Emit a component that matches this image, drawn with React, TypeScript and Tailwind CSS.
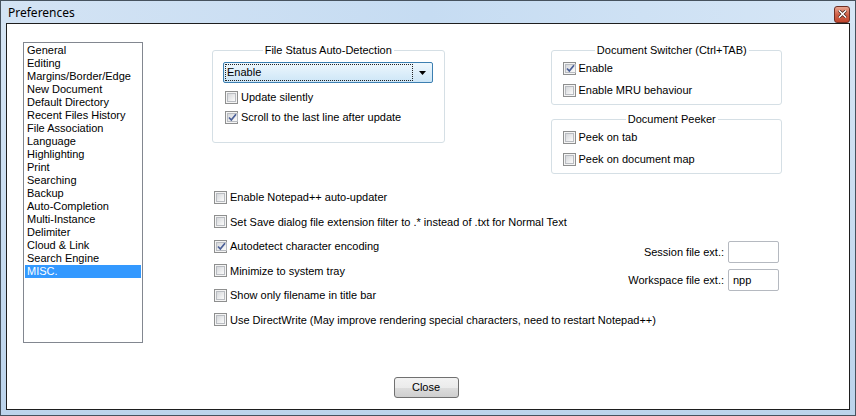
const SECTIONS = [
  "General", "Editing", "Margins/Border/Edge", "New Document", "Default Directory",
  "Recent Files History", "File Association", "Language", "Highlighting", "Print",
  "Searching", "Backup", "Auto-Completion", "Multi-Instance", "Delimiter",
  "Cloud & Link", "Search Engine", "MISC.",
];

const MISC_OPTIONS: { label: string; checked: boolean }[] = [
  { label: "Enable Notepad++ auto-updater", checked: false },
  { label: "Set Save dialog file extension filter to .* instead of .txt for Normal Text", checked: false },
  { label: "Autodetect character encoding", checked: true },
  { label: "Minimize to system tray", checked: false },
  { label: "Show only filename in title bar", checked: false },
];

function CheckBox({ checked }: { checked: boolean }) {
  return (
    <span className="w-[13px] h-[13px] shrink-0 border border-[#8e8f8f] bg-[#f4f4f4] p-[1px] flex">
      <span className="flex-1 border border-[#b9bcc1] bg-linear-to-br from-[#d6d8db] to-[#fbfbfb] flex items-center justify-center">
        {checked && (
          <svg width="9" height="9" viewBox="0 0 9 9">
            <path d="M1 4.5 L3.3 7 L8 1.2" fill="none" stroke="#4a5f97" strokeWidth="1.7" />
          </svg>
        )}
      </span>
    </span>
  );
}

function CheckRow({ label, checked, h }: { label: string; checked: boolean; h: string }) {
  return (
    <div className={`flex items-center gap-[3px] ${h}`}>
      <CheckBox checked={checked} />
      <span className="whitespace-nowrap">{label}</span>
    </div>
  );
}

function Group({ title, className, children }: { title: string; className: string; children: React.ReactNode }) {
  return (
    <fieldset className={`border border-[#d5dfe5] rounded-[3px] ${className}`}>
      <legend className="mx-auto px-[2px] leading-[13px]">{title}</legend>
      {children}
    </fieldset>
  );
}

export default function App() {
  return (
    <div className="w-[856px] h-[416px] border border-[#46525e] bg-linear-to-b from-[#d7e6f5] to-[#bcd4ec] flex flex-col font-['Liberation_Sans',Arial,sans-serif] text-[11px] text-black">
      {/* Title bar */}
      <div className="h-[22px] shrink-0 flex items-center justify-between pl-[7px] pr-[5px] bg-linear-to-r from-[#d3e3f4] via-[#c6dcf2] to-[#d6e6f6]">
        <span className="font-['Noto_Sans',sans-serif] text-[12px] leading-none pt-[2px]">Preferences</span>
        <div className="w-[16px] h-[17px] mt-[4px] rounded-[3px] border border-[#6f2f24] bg-linear-to-b from-[#e9a692] via-[#d0624a] to-[#c0442c] flex items-center justify-center">
          <svg width="9" height="8" viewBox="0 0 9 8">
            <path d="M1 0.5 L8 7.5 M8 0.5 L1 7.5" stroke="#3b1a14" strokeWidth="3" />
            <path d="M1 0.5 L8 7.5 M8 0.5 L1 7.5" stroke="#ffffff" strokeWidth="1.6" />
          </svg>
        </div>
      </div>

      {/* Client area */}
      <div className="flex-1 mx-[5px] mb-[5px] border border-[#1e1e1e] bg-white flex flex-col">
        <div className="flex items-start pl-[16px] pt-[18px]">
          {/* Section list */}
          <div className="w-[120px] h-[301px] shrink-0 border border-[#828790] pt-[1px] pl-[1px] pr-[1px]">
            {SECTIONS.map((s) => (
              <div
                key={s}
                className={`h-[13px] leading-[13px] pl-[2px] whitespace-nowrap ${s === "MISC." ? "bg-[#3399ff] text-white" : ""}`}
              >
                {s}
              </div>
            ))}
          </div>

          <div className="ml-[69px] mt-[2px] w-[570px] shrink-0 flex flex-col">
            <div className="flex items-start">
              <Group title="File Status Auto-Detection" className="w-[233px] h-[99px] px-[10px]">
                <div className="h-[21px] mt-[5px] w-[210px] border border-[#3c7fb1] rounded-[2px] bg-linear-to-b from-[#eef7fd] to-[#cde6f7] flex items-center px-[1px]">
                  <div className="h-[17px] flex-1 border border-dotted border-[#222] flex items-center pl-[1px]">Enable</div>
                  <div className="w-[18px] flex justify-center">
                    <svg width="7" height="4" viewBox="0 0 7 4">
                      <path d="M0 0 H7 L3.5 4 Z" fill="#000" />
                    </svg>
                  </div>
                </div>
                <div className="mt-[4px] ml-[2px]">
                  <CheckRow label="Update silently" checked={false} h="h-[20px]" />
                  <CheckRow label="Scroll to the last line after update" checked={true} h="h-[20px]" />
                </div>
              </Group>

              <div className="ml-[106px] w-[232px] flex flex-col">
                <Group title="Document Switcher (Ctrl+TAB)" className="h-[61px] pl-[11px]">
                  <CheckRow label="Enable" checked={true} h="h-[22px]" />
                  <CheckRow label="Enable MRU behaviour" checked={false} h="h-[22px]" />
                </Group>
                <Group title="Document Peeker" className="h-[61px] mt-[8px] pl-[11px]">
                  <CheckRow label="Peek on tab" checked={false} h="h-[22px]" />
                  <CheckRow label="Peek on document map" checked={false} h="h-[22px]" />
                </Group>
              </div>
            </div>

            <div className="mt-[11px] ml-[2px] flex flex-col">
              <div className="flex justify-between">
                <div>
                  {MISC_OPTIONS.map((o) => (
                    <CheckRow key={o.label} label={o.label} checked={o.checked} h="h-[24.5px]" />
                  ))}
                </div>
                <div className="mt-[56px] mr-[3px] flex flex-col items-end gap-[6px]">
                  <div className="flex items-center gap-[4px]">
                    <span className="whitespace-nowrap">Session file ext.:</span>
                    <div className="w-[51px] h-[22px] border border-[#b5b9c0] rounded-[2px]" />
                  </div>
                  <div className="flex items-center gap-[4px]">
                    <span className="whitespace-nowrap">Workspace file ext.:</span>
                    <div className="w-[51px] h-[22px] border border-[#b5b9c0] rounded-[2px] flex items-center pl-[4px]">npp</div>
                  </div>
                </div>
              </div>
              <CheckRow
                label="Use DirectWrite (May improve rendering special characters, need to restart Notepad++)"
                checked={false}
                h="h-[24.5px]"
              />
            </div>
          </div>
        </div>

        <div className="mt-auto mb-[11px] flex justify-center pr-[4px]">
          <button className="w-[65px] h-[21px] border border-[#707070] rounded-[3px] bg-[linear-gradient(#f2f2f2,#ebebeb_50%,#dddddd_51%,#cfcfcf)]">
            Close
          </button>
        </div>
      </div>
    </div>
  );
}
